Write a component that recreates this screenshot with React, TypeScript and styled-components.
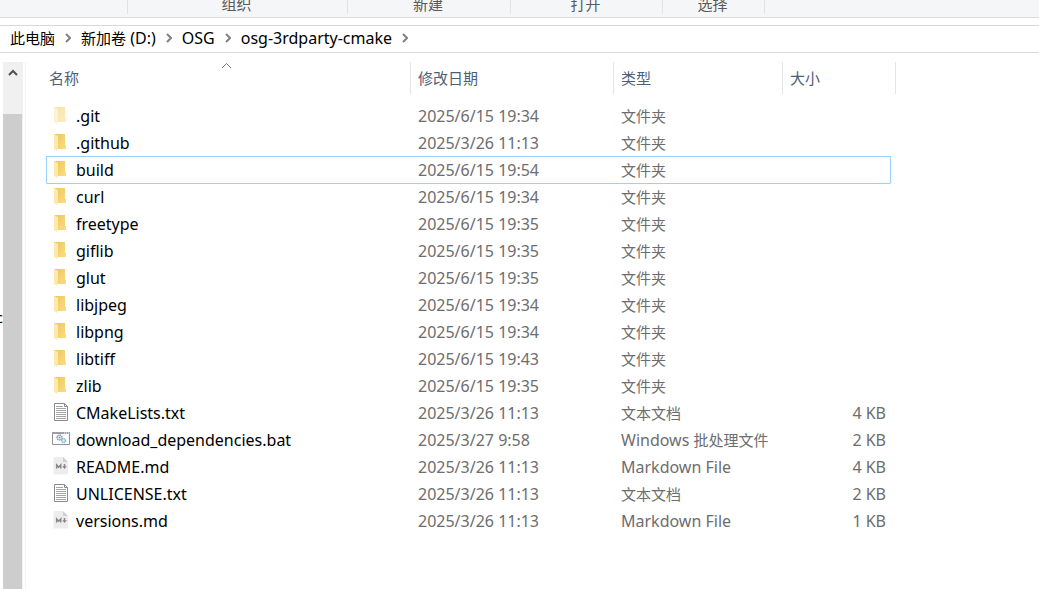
import React from "react";
import styled, { createGlobalStyle } from "styled-components";

const GlobalStyle = createGlobalStyle`
  * { box-sizing: border-box; }
  body {
    margin: 0;
    background: #ffffff;
    color: #000000;
    font: 15px/20px "Noto Sans", "Noto Sans CJK SC", sans-serif;
  }
`;

const Window = styled.div`
  display: flex;
  flex-direction: column;
  height: 100vh;
  overflow: hidden;
`;

const Ribbon = styled.div`
  display: flex;
  flex: none;
  height: 18px;
  overflow: hidden;
  background: #f5f6f7;
  border-bottom: 1px solid #dadbdc;
`;

const RibbonGroup = styled.div<{ $width: number }>`
  display: flex;
  justify-content: center;
  align-items: flex-end;
  flex: none;
  width: ${(p) => p.$width}px;
  height: 14px;
  padding-right: 2px;
  border-right: 1px solid #e2e3e4;
  color: #5a5a5a;
`;

const AddressBar = styled.nav`
  display: flex;
  align-items: center;
  flex: none;
  height: 28px;
  margin-top: 7px;
  padding: 0 0 2px 10px;
  border-top: 1px solid #d9d9d9;
  border-bottom: 1px solid #d9d9d9;
`;

const Crumb = styled.a`
  color: #000000;
  text-decoration: none;
  white-space: nowrap;
`;

const CrumbArrow = styled.svg`
  flex: none;
  width: 6px;
  height: 10px;
  margin: 0 10px;
  fill: none;
  stroke: #808080;
  stroke-width: 2;
`;

const Body = styled.div`
  display: flex;
  flex: 1;
  min-height: 0;
  padding-top: 9px;
`;

const TreePane = styled.aside`
  flex: none;
  width: 3px;
  overflow: hidden;
  padding-top: 245px;
  direction: rtl;
`;

const ScrollTrack = styled.div`
  display: flex;
  flex-direction: column;
  flex: none;
  width: 20px;
  padding-right: 1px;
  background: #f0f0f0;
`;

const ScrollButton = styled.button`
  display: flex;
  justify-content: center;
  flex: none;
  height: 52px;
  padding: 7px 0 0;
  border: 0;
  background: transparent;
`;

const ScrollThumb = styled.div`
  flex: 1;
  background: #cdcdcd;
`;

const FilePane = styled.main`
  flex: 1;
  min-width: 0;
  margin-left: 2px;
  padding-left: 20px;
  border-left: 1px solid #f2f2f2;
`;

const FileTable = styled.table`
  width: 850px;
  table-layout: fixed;
  border-collapse: separate;
  border-spacing: 0;
`;

const HeaderCell = styled.th<{ $first?: boolean }>`
  position: relative;
  height: 32px;
  padding: 0 0 0 ${(p) => (p.$first ? 3 : 7)}px;
  border-right: 1px solid #e5e5e5;
  color: #4c607a;
  font-weight: 400;
  text-align: left;
`;

const SortMark = styled.svg`
  position: absolute;
  top: 0;
  left: 175px;
  width: 11px;
  height: 7px;
  fill: none;
  stroke: #7a7a7a;
`;

const Gap = styled.tbody`
  td { height: 8px; padding: 0; }
`;

const Cell = styled.td<{ $right?: boolean }>`
  height: 27px;
  padding: 0 ${(p) => (p.$right ? 4 : 0)}px 0 7px;
  border: 0 solid transparent;
  border-top-width: 1px;
  color: #6d6d6d;
  text-align: ${(p) => (p.$right ? "right" : "left")};
  white-space: nowrap;
`;

const SizeCell = styled(Cell)`
  border-right-width: 1px;
`;

const NameCell = styled(Cell)`
  padding-left: 5px;
  border-left-width: 1px;
  color: #000000;
`;

const FileRow = styled.tr<{ $focused?: boolean }>`
  ${(p) =>
    p.$focused &&
    `
    ${Cell} { border-color: #99d1ff; }
    & + tr ${Cell} { border-top-color: #99d1ff; }
  `}
`;

const Name = styled.span`
  display: flex;
  align-items: center;
  gap: 6px;
`;

const Latin = styled.span`
  font-size: 16px;
`;

const IconSvg = styled.svg<{ $faded?: boolean }>`
  flex: none;
  width: 18px;
  height: 20px;
  margin-bottom: 2px;
  opacity: ${(p) => (p.$faded ? 0.5 : 1)};
`;

/* Latin runs are set one step larger than the Chinese text beside them. */
const Mixed = ({ text }: { text: string }) => (
  <>
    {text
      .split(/([\u4e00-\u9fff]+)/)
      .filter(Boolean)
      .map((run, i) => (/[\u4e00-\u9fff]/.test(run) ? run : <Latin key={i}>{run}</Latin>))}
  </>
);

type Kind = "hidden" | "folder" | "text" | "batch" | "markdown";

const FileIcon = ({ kind }: { kind: Kind }) => {
  if (kind === "text")
    return (
      <IconSvg viewBox="0 0 18 20">
        <path d="M2.500 1.500h10l3 3v14h-13z" fill="#fff" stroke="#8a8a8a" />
        <path d="M12.500 1.500v3h3" fill="none" stroke="#8a8a8a" />
        <path d="M4 4.500h7M4 6.500h10M4 8.500h10M4 10.500h10M4 12.500h10M4 14.500h10M4 16.500h10" stroke="#a4a4a4" />
      </IconSvg>
    );
  if (kind === "batch")
    return (
      <IconSvg viewBox="0 0 18 20">
        <path d="M.5 3.500h17v12H.5z" fill="#fff" stroke="#8c9196" />
        <path d="M0 4h18" stroke="#9aa0a5" strokeWidth="2" />
        <path d="M12 4h1M14 4h1M16 4h1" stroke="#fff" />
        <circle cx="7.500" cy="8.500" r="2.500" fill="#e9ecee" stroke="#8f9aa3" strokeWidth="1.500" strokeDasharray="1.200 .5" />
        <circle cx="7.500" cy="8.500" r=".8" fill="#7f8a93" />
        <circle cx="11.500" cy="11.500" r="2" fill="#dceef8" stroke="#7cb6d8" strokeWidth="1.500" strokeDasharray="1.200 .5" />
      </IconSvg>
    );
  if (kind === "markdown")
    return (
      <IconSvg viewBox="0 0 18 20">
        <path d="M2.500 1H11l5 5v11.500l-1 1H2l-.5-.5V2z" fill="#ededed" />
        <path d="M11 1v5h5z" fill="#d0d0d0" />
        <path d="M4.700 12.500V9l2 2.200 2-2.200v3.500" fill="none" stroke="#868686" strokeWidth="1.500" />
        <path d="M12.500 8v3" stroke="#868686" strokeWidth="1.500" />
        <path d="M10.200 10.200h4.600l-2.300 2.800z" fill="#868686" />
      </IconSvg>
    );
  return (
    <IconSvg viewBox="0 0 18 20" $faded={kind === "hidden"}>
      <defs>
        <linearGradient id="folderBack" x1="0" y1="0" x2="1" y2="1">
          <stop offset="0" stopColor="#edc75c" />
          <stop offset="1" stopColor="#fbdc82" />
        </linearGradient>
      </defs>
      <path d="M2 2h11v11h1v4H5z" fill="url(#folderBack)" />
      <path d="M2 2l4 2v11l-1 4-3-2z" fill="#fde9a9" />
    </IconSvg>
  );
};

const groups = [
  { label: "", width: 128 },
  { label: "组织", width: 220 },
  { label: "新建", width: 163 },
  { label: "打开", width: 152 },
  { label: "选择", width: 102 },
];

const crumbs = ["此电脑", "新加卷 (D:)", "OSG", "osg-3rdparty-cmake"];

type Entry = { name: string; date: string; type: string; size?: string; kind: Kind };

const folder = (name: string, date: string, kind: Kind = "folder"): Entry => ({ name, date, type: "文件夹", kind });

const entries: Entry[] = [
  folder(".git", "2025/6/15 19:34", "hidden"),
  folder(".github", "2025/3/26 11:13"),
  folder("build", "2025/6/15 19:54"),
  folder("curl", "2025/6/15 19:34"),
  folder("freetype", "2025/6/15 19:35"),
  folder("giflib", "2025/6/15 19:35"),
  folder("glut", "2025/6/15 19:35"),
  folder("libjpeg", "2025/6/15 19:34"),
  folder("libpng", "2025/6/15 19:34"),
  folder("libtiff", "2025/6/15 19:43"),
  folder("zlib", "2025/6/15 19:35"),
  { name: "CMakeLists.txt", date: "2025/3/26 11:13", type: "文本文档", size: "4 KB", kind: "text" },
  { name: "download_dependencies.bat", date: "2025/3/27 9:58", type: "Windows 批处理文件", size: "2 KB", kind: "batch" },
  { name: "README.md", date: "2025/3/26 11:13", type: "Markdown File", size: "4 KB", kind: "markdown" },
  { name: "UNLICENSE.txt", date: "2025/3/26 11:13", type: "文本文档", size: "2 KB", kind: "text" },
  { name: "versions.md", date: "2025/3/26 11:13", type: "Markdown File", size: "1 KB", kind: "markdown" },
];

export default function App() {
  return (
    <Window>
      <GlobalStyle />
      <Ribbon>
        {groups.map((g) => (
          <RibbonGroup key={g.width} $width={g.width}>
            {g.label}
          </RibbonGroup>
        ))}
      </Ribbon>
      <AddressBar aria-label="Path">
        {crumbs.map((c) => (
          <React.Fragment key={c}>
            <Crumb href="#">
              <Mixed text={c} />
            </Crumb>
            <CrumbArrow viewBox="0 0 6 10">
              <path d="M1 1l4 4-4 4" />
            </CrumbArrow>
          </React.Fragment>
        ))}
      </AddressBar>
      <Body>
        <TreePane>c</TreePane>
        <ScrollTrack>
          <ScrollButton aria-label="Scroll up">
            <svg width="10" height="8" viewBox="0 0 10 8" fill="none" stroke="#505050" strokeWidth="2">
              <path d="M1 6l4-4 4 4" />
            </svg>
          </ScrollButton>
          <ScrollThumb />
        </ScrollTrack>
        <FilePane>
          <FileTable>
            <colgroup>
              <col style={{ width: 365 }} />
              <col style={{ width: 203 }} />
              <col style={{ width: 169 }} />
              <col style={{ width: 108 }} />
              <col style={{ width: 5 }} />
            </colgroup>
            <thead>
              <tr>
                <HeaderCell $first>
                  名称
                  <SortMark viewBox="0 0 11 7">
                    <path d="M1 6l4.500-4.500L10 6" />
                  </SortMark>
                </HeaderCell>
                <HeaderCell>修改日期</HeaderCell>
                <HeaderCell>类型</HeaderCell>
                <HeaderCell colSpan={2}>大小</HeaderCell>
              </tr>
            </thead>
            <Gap>
              <tr>
                <td colSpan={5} />
              </tr>
            </Gap>
            <tbody>
              {entries.map((e) => (
                <FileRow key={e.name} $focused={e.name === "build"}>
                  <NameCell>
                    <Name>
                      <FileIcon kind={e.kind} />
                      <Latin>{e.name}</Latin>
                    </Name>
                  </NameCell>
                  <Cell>
                    <Latin>{e.date}</Latin>
                  </Cell>
                  <Cell>
                    <Mixed text={e.type} />
                  </Cell>
                  <SizeCell $right>
                    <Latin>{e.size}</Latin>
                  </SizeCell>
                </FileRow>
              ))}
            </tbody>
          </FileTable>
        </FilePane>
      </Body>
    </Window>
  );
}
